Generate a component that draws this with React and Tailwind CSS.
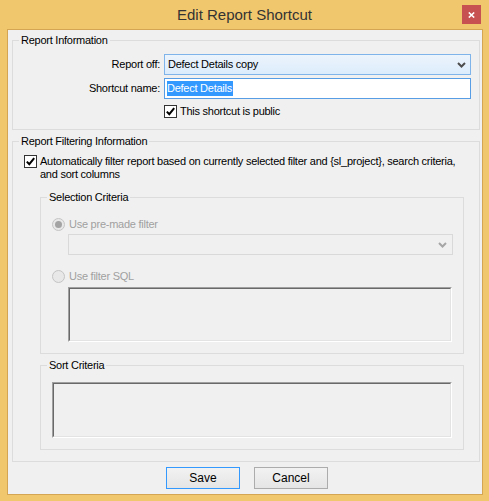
import React from "react";

function Chevron({ color = "#4d4d4d" }) {
  return (
    <svg width="9" height="6" viewBox="0 0 9 6" className="block">
      <path d="M1 1 L4.5 4.5 L8 1" fill="none" stroke={color} strokeWidth="2" />
    </svg>
  );
}

function Check() {
  return (
    <span className="w-[13px] h-[13px] border border-[#333333] bg-white flex items-center justify-center shrink-0">
      <svg width="11" height="11" viewBox="0 0 11 11" className="block">
        <path d="M1.8 5.6 L4.3 8.2 L9.2 2.2" fill="none" stroke="#000" strokeWidth="2" />
      </svg>
    </span>
  );
}

function Radio({ checked }) {
  return (
    <span className="w-[13px] h-[13px] rounded-full border border-[#c4c4c4] bg-[#e8e8e8] flex items-center justify-center shrink-0">
      {checked && <span className="w-[7px] h-[7px] rounded-full bg-[#a3a3a3]" />}
    </span>
  );
}

function Group({ title, className = "", children }) {
  return (
    <fieldset className={"border border-[#dcdcdc] p-0 min-w-0 " + className}>
      <legend className="ml-[6px] px-[2px] leading-[16px] text-black">{title}</legend>
      {children}
    </fieldset>
  );
}

function Sunken({ className = "" }) {
  return (
    <div className={"border-t border-l border-[#a0a0a0] border-b border-r border-b-white border-r-white flex " + className}>
      <div className="flex-1 border-t border-l border-[#696969] border-b border-r border-b-[#e3e3e3] border-r-[#e3e3e3] bg-[#f0f0f0]" />
    </div>
  );
}

export default function App() {
  return (
    <div className="w-[489px] h-[501px] bg-[#f1c76d] flex flex-col font-['Liberation_Sans',Arial,sans-serif] text-[11px] tracking-[-0.25px] text-black">
      {/* Title bar */}
      <div className="h-[29px] grid grid-cols-[1fr_auto_1fr] items-start shrink-0">
        <div />
        <div className="pt-[5px] text-[15px] tracking-normal text-[#333333] leading-[20px]">Edit Report Shortcut</div>
        <div className="flex justify-end pr-[8px] pt-[5px]">
          <div className="w-[19px] h-[19px] bg-[#c75050] flex items-center justify-center">
            <svg width="7" height="6" viewBox="0 0 7 6" className="block">
              <path d="M0.8 0.5 L6.2 5.5 M6.2 0.5 L0.8 5.5" stroke="#fff" strokeWidth="1.6" />
            </svg>
          </div>
        </div>
      </div>

      {/* Client panel */}
      <div className="ml-[7px] mr-[6px] mb-[6px] flex-1 border border-[#d4a654] bg-[#f0f0f0] flex flex-col pl-[4px] pr-[2px]">
        <Group title="Report Information" className="mt-[2px] pb-[11px]">
          <div className="grid grid-cols-[147px_1fr] gap-x-[4px] mt-[6px] pr-[8px] items-center">
            <div className="text-right">Report off:</div>
            <div className="h-[21px] border border-[#7eb4ea] bg-gradient-to-b from-[#ecf4fc] to-[#dcecfc] flex items-center pl-[3px] pr-[4px]">
              <span className="flex-1">Defect Details copy</span>
              <Chevron />
            </div>
            <div className="text-right mt-[3px]">Shortcut name:</div>
            <div className="h-[21px] mt-[3px] border border-[#569de5] bg-white flex items-center pl-[2px]">
              <span className="bg-[#3399ff] text-white leading-[15px] pr-[1px]">Defect Details</span>
            </div>
            <div />
            <div className="mt-[5px] flex items-center gap-[3px] h-[14px]">
              <Check />
              <span>This shortcut is public</span>
            </div>
          </div>
        </Group>

        <Group title="Report Filtering Information" className="mt-[3px] pb-[11px]">
          <div className="flex items-start gap-[3px] ml-[11px] mt-[6px] pr-[8px]">
            <Check />
            <span className="leading-[13px]">
              Automatically filter report based on currently selected filter and {"{sl_project}"}, search criteria,
              <br />
              and sort columns
            </span>
          </div>

          <Group title="Selection Criteria" className="mt-[8px] ml-[27px] mr-[15px] pb-[11px]">
            <div className="flex items-center gap-[4px] ml-[11px] mt-[11px] h-[16px] text-[#a0a0a0]">
              <Radio checked />
              <span>Use pre-made filter</span>
            </div>
            <div className="ml-[27px] mr-[10px] mt-[2px] h-[21px] border border-[#d9d9d9] flex items-center justify-end pr-[5px]">
              <Chevron color="#a6a6a6" />
            </div>
            <div className="flex items-center gap-[4px] ml-[11px] mt-[13px] h-[16px] text-[#a0a0a0]">
              <Radio />
              <span>Use filter SQL</span>
            </div>
            <Sunken className="ml-[27px] mr-[11px] mt-[3px] h-[55px]" />
          </Group>

          <Group title="Sort Criteria" className="mt-[3px] ml-[27px] mr-[15px] pb-[11px]">
            <Sunken className="ml-[11px] mr-[11px] mt-[9px] h-[56px]" />
          </Group>
        </Group>

        <div className="flex justify-center gap-[14px] mt-[5px] pl-[2px]">
          <button className="w-[74px] h-[22px] border border-[#3399ff] bg-gradient-to-b from-[#f2f2f2] to-[#e5e5e5] text-[12px] tracking-normal">Save</button>
          <button className="w-[74px] h-[22px] border border-[#acacac] bg-gradient-to-b from-[#f2f2f2] to-[#e5e5e5] text-[12px] tracking-normal">Cancel</button>
        </div>
      </div>
    </div>
  );
}
